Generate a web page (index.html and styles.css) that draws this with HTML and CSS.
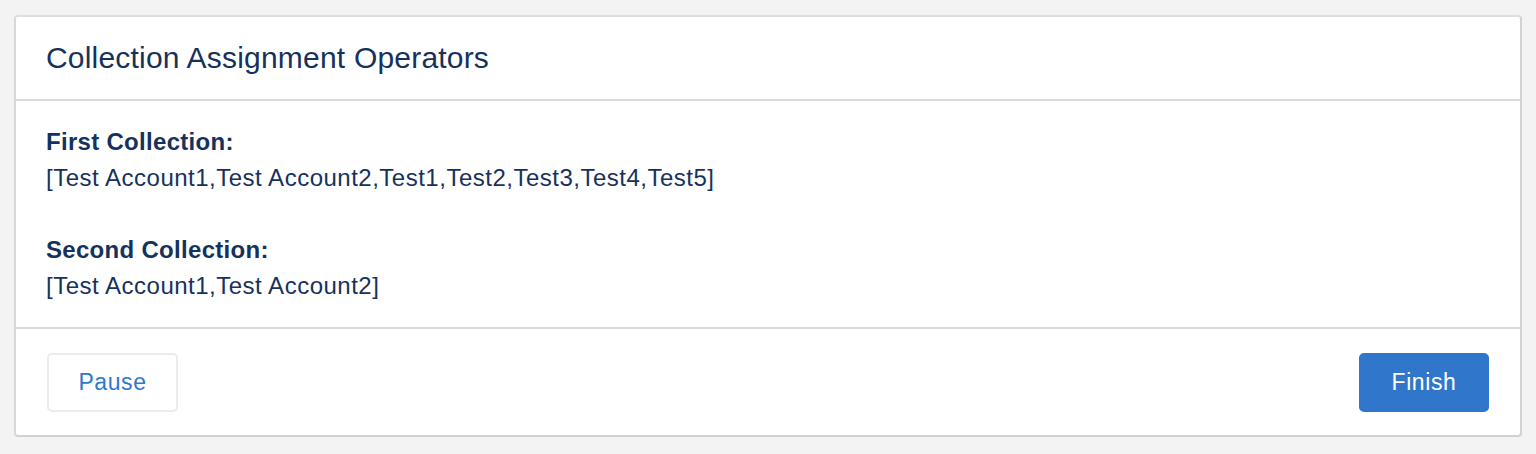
FILE: index.html
```html
<!DOCTYPE html>
<html lang="en">
<head>
<meta charset="utf-8">
<title>Collection Assignment Operators</title>
<link rel="stylesheet" href="styles.css">
</head>
<body>
  <div class="card">
    <div class="card-header">
      <h1 class="title">Collection Assignment Operators</h1>
    </div>
    <div class="card-body">
      <div class="field">
        <div class="label">First Collection:</div>
        <div class="value">[Test Account1,Test Account2,Test1,Test2,Test3,Test4,Test5]</div>
      </div>
      <div class="field">
        <div class="label">Second Collection:</div>
        <div class="value">[Test Account1,Test Account2]</div>
      </div>
    </div>
    <div class="card-footer">
      <button class="btn btn-neutral">Pause</button>
      <button class="btn btn-brand">Finish</button>
    </div>
  </div>
</body>
</html>
```

FILE: styles.css
```css
html, body {
  margin: 0;
  padding: 0;
}
body {
  background: #f3f3f3;
  font-family: "Liberation Sans", Arial, sans-serif;
  color: #16325c;
  padding: 15px 14px 0 14px;
}
.card {
  background: #ffffff;
  border: 2px solid #d2d2d2;
  border-top-color: #dedede;
  border-left-color: #d8d8d8;
  border-radius: 4px;
  height: 422px;
  box-sizing: border-box;
  display: flex;
  flex-direction: column;
}
.card-header {
  height: 84px;
  box-sizing: border-box;
  border-bottom: 2px solid #d9d9d9;
  display: flex;
  align-items: center;
  padding: 0 30px;
}
.title {
  margin: 0;
  font-size: 30px;
  font-weight: 400;
  letter-spacing: 0.2px;
  line-height: 36px;
}
.card-body {
  padding: 23px 30px 0 30px;
  height: 228px;
  box-sizing: border-box;
  border-bottom: 2px solid #d9d9d9;
  font-size: 24px;
  line-height: 36px;
  letter-spacing: 0.5px;
}
.field + .field {
  margin-top: 36px;
}
.label {
  font-weight: 700;
  letter-spacing: 0.3px;
}
.card-footer {
  flex: 1;
  display: flex;
  align-items: center;
  justify-content: space-between;
  padding: 0 31px;
}
.btn {
  font-family: "Liberation Sans", Arial, sans-serif;
  font-size: 23px;
  height: 59px;
  border-radius: 5px;
  padding: 0;
  cursor: pointer;
  letter-spacing: 0.6px;
}
.btn-neutral {
  width: 131px;
  background: #ffffff;
  color: #3077cc;
  border: 2px solid #ececec;
}
.btn-brand {
  width: 130px;
  background: #3077cc;
  color: #ffffff;
  border: 2px solid #3077cc;
}
```
